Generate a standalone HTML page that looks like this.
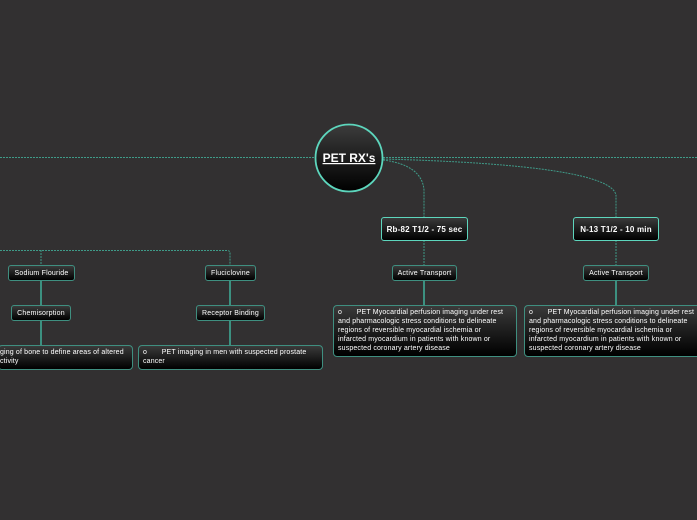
<!DOCTYPE html>
<html><head><meta charset="utf-8"><style>
html,body{margin:0;padding:0;overflow:hidden}
body{width:697px;height:520px;background:#323031;position:relative;font-family:"Liberation Sans","DejaVu Sans",sans-serif;color:#fff}
#w{position:absolute;left:0;top:0;width:697px;height:520px;overflow:hidden}
.b{position:absolute;box-sizing:border-box;background:linear-gradient(#3a3a3a,#000);border:1px solid #3f8f80;border-radius:3px;font-size:7px;letter-spacing:0.2px;display:flex;align-items:center;justify-content:center;white-space:nowrap}
.m{border:1.5px solid #5dd6bd;font-weight:bold;font-size:8px;border-radius:3px}
.t{display:block;white-space:nowrap;padding:2px 4px;line-height:9px;font-size:7px;letter-spacing:0.15px;border-radius:4px;overflow:hidden}
</style></head><body><div id="w">
<svg width="697" height="520" style="position:absolute;left:0;top:0">
<defs><linearGradient id="g" x1="0" y1="0" x2="0" y2="1"><stop offset="0" stop-color="#3c3c3c"/><stop offset="1" stop-color="#000"/></linearGradient></defs>
<g stroke="#3f9a88" stroke-width="1" fill="none" stroke-dasharray="2,1">
<line x1="0" y1="157.5" x2="315" y2="157.5"/>
<line x1="383" y1="157.5" x2="697" y2="157.5"/>
<path d="M383 160 Q422 165 424 190 L424 217"/>
<path d="M383 159 Q610 165 616 195 L616 217"/>
<line x1="424" y1="240" x2="424" y2="265"/>
<line x1="616" y1="240" x2="616" y2="265"/>
<path d="M0 250.5 H227 Q230 250.5 230 253 V265"/>
<line x1="41" y1="250" x2="41" y2="265"/>
</g>
<g stroke="#3fb09a" stroke-width="1.5">
<line x1="424" y1="280" x2="424" y2="305"/>
<line x1="616" y1="280" x2="616" y2="305"/>
<line x1="41" y1="280" x2="41" y2="305"/>
<line x1="41" y1="320" x2="41" y2="345"/>
<line x1="230" y1="280" x2="230" y2="305"/>
<line x1="230" y1="320" x2="230" y2="345"/>
</g>
<circle cx="349" cy="158" r="33.5" fill="url(#g)" stroke="#5dd6bd" stroke-width="1.8"/>
<text x="349" y="162" text-anchor="middle" fill="#fff" font-family="Liberation Sans,sans-serif" font-weight="bold" font-size="12" text-decoration="underline">PET RX's</text>
</svg>
<div class="b m" style="left:381px;top:217px;width:87px;height:24px">Rb-82 T1/2 - 75 sec</div>
<div class="b m" style="left:573px;top:217px;width:86px;height:24px">N-13 T1/2 - 10 min</div>
<div class="b" style="left:392px;top:265px;width:65px;height:16px">Active Transport</div>
<div class="b" style="left:583px;top:265px;width:66px;height:16px">Active Transport</div>
<div class="b t" style="left:333px;top:305px;width:184px;height:52px">o&nbsp;&nbsp;&nbsp;&nbsp;&nbsp;&nbsp; PET Myocardial perfusion imaging under rest<br>and pharmacologic stress conditions to delineate<br>regions of reversible myocardial ischemia or<br>infarcted myocardium in patients with known or<br>suspected coronary artery disease</div>
<div class="b t" style="left:524px;top:305px;width:184px;height:52px">o&nbsp;&nbsp;&nbsp;&nbsp;&nbsp;&nbsp; PET Myocardial perfusion imaging under rest<br>and pharmacologic stress conditions to delineate<br>regions of reversible myocardial ischemia or<br>infarcted myocardium in patients with known or<br>suspected coronary artery disease</div>
<div class="b" style="left:8px;top:265px;width:67px;height:16px">Sodium Flouride</div>
<div class="b" style="left:205px;top:265px;width:51px;height:16px">Fluciclovine</div>
<div class="b" style="left:11px;top:305px;width:60px;height:16px">Chemisorption</div>
<div class="b" style="left:196px;top:305px;width:69px;height:16px">Receptor Binding</div>
<div class="b t" style="left:-2px;top:345px;width:135px;height:25px;padding-left:1px">ging of bone to define areas of altered<br>ctivity</div>
<div class="b t" style="left:138px;top:345px;width:185px;height:25px">o&nbsp;&nbsp;&nbsp;&nbsp;&nbsp;&nbsp; PET imaging in men with suspected prostate<br>cancer</div>
</div></body></html>
